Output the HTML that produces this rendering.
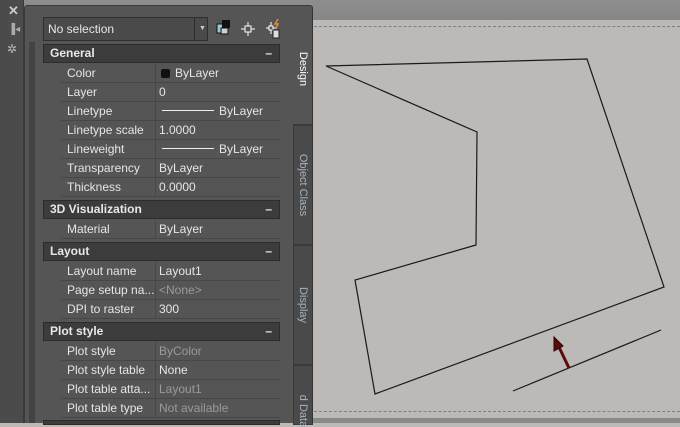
<!DOCTYPE html>
<html><head><style>
*{margin:0;padding:0;box-sizing:border-box}
body{width:680px;height:423px;overflow:hidden;background:#bcb9b7;font-family:"Liberation Sans",sans-serif;font-size:12px;position:relative}
.abs{position:absolute}
.hdr{position:absolute;left:43px;width:237px;height:19px;background:#3c3c3c;border:1px solid #2c2c2c;color:#e8e8e8;font-weight:bold;padding-left:6px;line-height:17px}
.hdr span{position:absolute;right:7px;top:0}
.row{position:absolute;left:61px;width:219px;height:19px;border-bottom:1px solid #474747;color:#e6e6e6;line-height:19px}
.row .l{position:absolute;left:6px}
.row .v{position:absolute;left:94px;top:0;height:19px;border-left:1px solid #474747;padding-left:3px;width:125px}
.g{color:#9a9a9a}
.ln{display:inline-block;width:52px;height:1px;background:#eee;vertical-align:middle;margin:0 5px 2px 3px}
.tab{position:absolute;left:293px;width:20px;background:#4a4a4a;border:1px solid #3a3a3a;border-right:1px solid #333}
.tab div{position:absolute;left:50%;top:50%;transform:translate(-50%,-50%) rotate(90deg);white-space:nowrap;color:#a8b4c0;font-size:11px}
</style></head><body>
<div class="abs" style="left:0;top:0;width:680px;height:20px;background:linear-gradient(#8e8e8e,#868686)"></div>
<div class="abs" style="left:310px;top:20px;width:370px;height:398px;background:#bcb9b7"></div>
<div class="abs" style="left:314px;top:26px;width:366px;border-top:1px dashed #808080"></div>
<div class="abs" style="left:314px;top:411px;width:366px;border-top:1px dashed #808080"></div>
<div class="abs" style="left:310px;top:418px;width:370px;height:5px;background:#8a8a8a"></div>
<svg class="abs" style="left:0;top:0" width="680" height="423">
<polyline points="326,66 587,59 664,287 375,394 355,280 476,245 477,132 326,66" fill="none" stroke="#1a1a1a" stroke-width="1.2"/>
<line x1="513" y1="391" x2="661" y2="330" stroke="#1a1a1a" stroke-width="1.2"/>
<line x1="569" y1="368" x2="558" y2="345" stroke="#5a0c0c" stroke-width="3"/>
<polygon points="554,337 554,351 563,346" fill="#5a0c0c" stroke="#2a0505"/>
</svg>
<div class="abs" style="left:0;top:0;width:24px;height:423px;background:#4b4b4b;border-right:1px solid #3a3a3a"></div>
<div class="abs" style="left:8px;top:3px;color:#ccc;font-size:13px;font-weight:bold">✕</div>
<div class="abs" style="left:8px;top:24px;color:#aaa;font-size:10px">▐◂</div>
<div class="abs" style="left:7px;top:42px;color:#bbb;font-size:12px">✲</div>
<div class="abs" style="left:24px;top:5px;width:270px;height:418px;background:#555;border-top:1px solid #3a3a3a;border-left:1px solid #3a3a3a;border-radius:3px 0 0 0"></div>
<div class="abs" style="left:29px;top:42px;width:6px;height:381px;background:#434343"></div>
<div class="abs" style="left:43px;top:17px;width:165px;height:24px;background:#4a4a4a;border:1px solid #2e2e2e;color:#e6e6e6;line-height:22px;padding-left:4px">No selection<span style="position:absolute;left:150px;top:0;width:1px;height:22px;background:#2e2e2e"></span><span style="position:absolute;left:155px;top:0;font-size:7px;color:#ccc">▼</span></div>
<svg class="abs" style="left:214px;top:18px" width="70" height="22">
<rect x="3" y="6" width="9" height="9" fill="#9cc" stroke="#111"/><rect x="8" y="2" width="8" height="8" fill="#111"/><rect x="7" y="10" width="7" height="6" fill="#ccd" stroke="#111"/>
<line x1="27" y1="11" x2="41" y2="11" stroke="#fff"/><line x1="34" y1="4" x2="34" y2="18" stroke="#fff"/><rect x="31" y="8" width="6" height="6" fill="#555" stroke="#fff"/>
<line x1="52" y1="10" x2="63" y2="10" stroke="#fff"/><line x1="57" y1="4" x2="57" y2="16" stroke="#fff"/><rect x="55" y="8" width="4" height="4" fill="#555" stroke="#fff"/>
<path d="M64 1 L61 6 L64 6 L62 10" stroke="#e08a3a" fill="none" stroke-width="1.5"/><rect x="59" y="12" width="6" height="8" fill="#ddd" stroke="#222"/>
</svg>
<div class="hdr" style="top:44px">General<span>–</span></div>
<div class="row" style="top:64px"><span class="l">Color</span><span class="v"><span style="display:inline-block;width:9px;height:9px;background:#111;border-radius:2px;margin:0 5px -1px 2px"></span>ByLayer</span></div>
<div class="row" style="top:83px"><span class="l">Layer</span><span class="v">0</span></div>
<div class="row" style="top:102px"><span class="l">Linetype</span><span class="v"><span class="ln"></span>ByLayer</span></div>
<div class="row" style="top:121px"><span class="l">Linetype scale</span><span class="v">1.0000</span></div>
<div class="row" style="top:140px"><span class="l">Lineweight</span><span class="v"><span class="ln"></span>ByLayer</span></div>
<div class="row" style="top:159px"><span class="l">Transparency</span><span class="v">ByLayer</span></div>
<div class="row" style="top:178px"><span class="l">Thickness</span><span class="v">0.0000</span></div>
<div class="hdr" style="top:200px">3D Visualization<span>–</span></div>
<div class="row" style="top:220px"><span class="l">Material</span><span class="v">ByLayer</span></div>
<div class="hdr" style="top:242px">Layout<span>–</span></div>
<div class="row" style="top:262px"><span class="l">Layout name</span><span class="v">Layout1</span></div>
<div class="row" style="top:281px"><span class="l">Page setup na...</span><span class="v g">&lt;None&gt;</span></div>
<div class="row" style="top:300px"><span class="l">DPI to raster</span><span class="v">300</span></div>
<div class="hdr" style="top:322px">Plot style<span>–</span></div>
<div class="row" style="top:342px"><span class="l">Plot style</span><span class="v g">ByColor</span></div>
<div class="row" style="top:361px"><span class="l">Plot style table</span><span class="v">None</span></div>
<div class="row" style="top:380px"><span class="l">Plot table atta...</span><span class="v g">Layout1</span></div>
<div class="row" style="top:399px"><span class="l">Plot table type</span><span class="v g">Not available</span></div>
<div class="hdr" style="top:420px;height:5px"></div>
<div class="tab" style="top:5px;height:120px;background:#555;border-left:none;border-radius:0 3px 0 0"><div style="color:#fff;top:63px">Design</div></div>
<div class="tab" style="top:125px;height:120px"><div>Object Class</div></div>
<div class="tab" style="top:245px;height:120px"><div>Display</div></div>
<div class="tab" style="top:365px;height:60px"><div style="top:45px">d Data</div></div>
</body></html>
